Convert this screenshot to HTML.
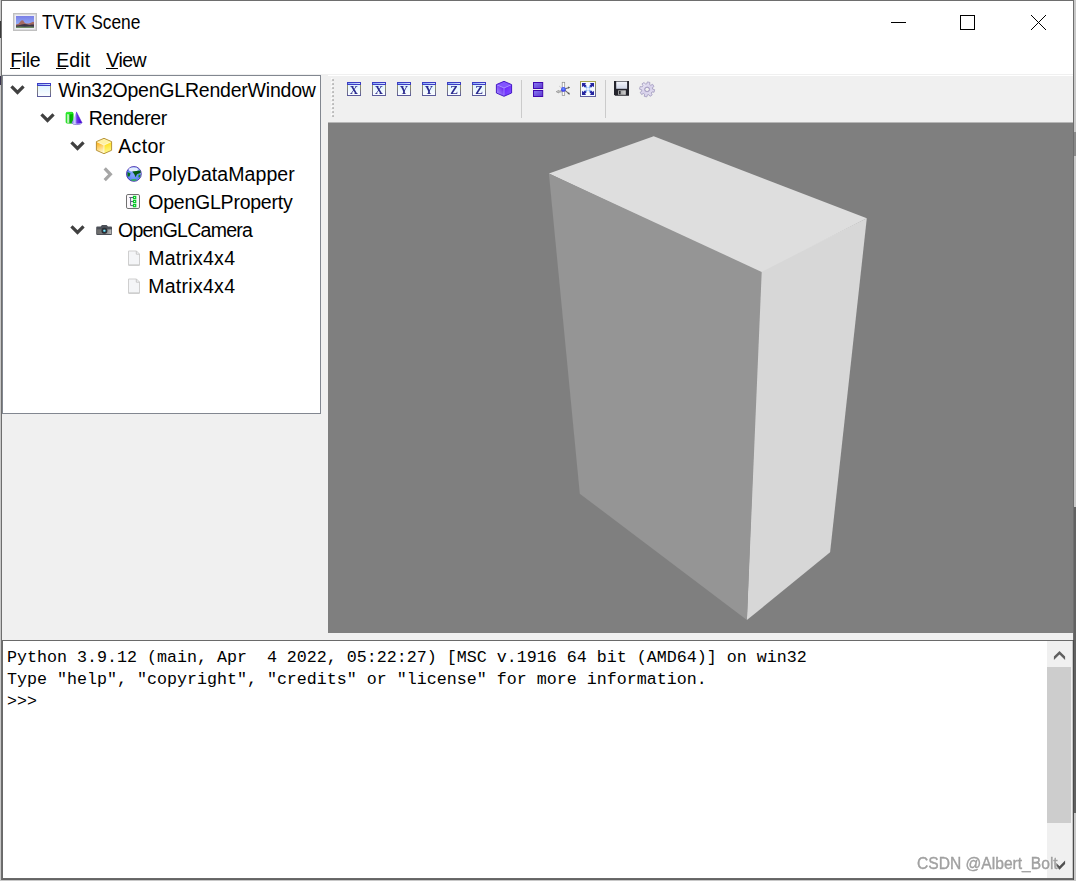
<!DOCTYPE html>
<html lang="en">
<head>
<meta charset="utf-8">
<title>TVTK Scene</title>
<style>
  html, body { margin: 0; padding: 0; }
  body {
    width: 1076px; height: 881px; overflow: hidden; position: relative;
    background: #c8c8c8;
    font-family: "Liberation Sans", sans-serif;
    font-size: 19px; color: #000;
  }
  .abs { position: absolute; }
  #win { left: 1px; top: 0; width: 1073px; height: 879px; background: #f0f0f0; }
  #frame { z-index: 6; left: 1px; top: 0; width: 1071px; height: 878px; border: 1px solid #6e6e6e; border-bottom-color: #646464; pointer-events: none; }
  #titlebar { left: 2px; top: 1px; width: 1071px; height: 73px; background: #fff; }
  #title { top: 8px; line-height: 28px; white-space: pre; font-size: 20px; }
  .menu { top: 46px; line-height: 28px; white-space: pre; font-size: 19.5px; }
  .menu u { text-decoration: none; }
  .ul { top: 68px; height: 1px; background: #000; }
  #tree { left: 2px; top: 75px; width: 317px; height: 337px; background: #fff; border: 1px solid #828790; }
  .row { height: 28px; line-height: 28px; white-space: pre; font-size: 19.5px; }
  #toolbar-hi { left: 328px; top: 75px; width: 745px; height: 1px; background: #fff; }
  #scene { left: 328px; top: 122px; width: 745px; height: 511px; background: #7f7f7f; border-top: 1px solid #b6b6b6; box-sizing: border-box; }
  #console { left: 2px; top: 640px; width: 1071px; height: 239px; background: #fff; border-top: 1px solid #6a6a6a; border-left: 1px solid #6a6a6a; border-bottom: 1px solid #6a6a6a; box-sizing: border-box; }
  #context { left: 7px; top: 646.5px; font-family: "Liberation Mono", monospace; font-size: 16.6667px; line-height: 22px; white-space: pre; margin: 0; }
  #sb { left: 1047px; top: 641px; width: 26px; height: 237px; background: #f0f0f0; border-right: 1px solid #c4c4c4; box-sizing: border-box; }
  #thumb { left: 1047px; top: 667px; width: 24px; height: 156px; background: #cdcdcd; }
  #wm { z-index: 7; left: 916.5px; top: 853.4px; font-size: 16px; -webkit-text-stroke: 0.35px #9c9c9c; transform: scaleX(0.975); transform-origin: 0 0; line-height: 22px; color: #a2a2a2; white-space: pre; text-shadow: 0 0 1.5px #fff, 0 0 1.5px #fff, 0 0 2px #fff; }
  svg { position: absolute; overflow: visible; }
  /*TUNE-START*/
  #title { left: 42.37px; transform: scaleX(0.8673); transform-origin: 0 0; }
  #m1 { left: 10.26px; letter-spacing: -0.332px; }
  #m2 { left: 56.26px; letter-spacing: 0.082px; }
  #m3 { left: 106.32px; letter-spacing: -0.513px; }
  #r1 { left: 58.34px; letter-spacing: -0.215px; }
  #r2 { left: 88.66px; letter-spacing: -0.395px; }
  #r3 { left: 118.29px; letter-spacing: 0.328px; }
  #r4 { left: 148.56px; letter-spacing: 0.071px; }
  #r5 { left: 148.32px; letter-spacing: -0.237px; }
  #r6 { left: 118.00px; letter-spacing: -0.751px; }
  #r7 { left: 148.18px; letter-spacing: 0.287px; }
  #r8 { left: 148.18px; letter-spacing: 0.287px; }
  /*TUNE-END*/
</style>
</head>
<body>
<div id="win" class="abs"></div>
<div id="titlebar" class="abs"></div>

<!-- title -->
<div id="title" class="abs">TVTK Scene</div>

<!-- menu -->
<div id="m1" class="abs menu"><u>F</u>ile</div>
<div id="m2" class="abs menu"><u>E</u>dit</div>
<div id="m3" class="abs menu"><u>V</u>iew</div>
<div class="abs ul" style="left:10px;width:10px"></div>
<div class="abs ul" style="left:56px;width:10px"></div>
<div class="abs ul" style="left:106px;width:12px"></div>

<!-- tree -->
<div id="tree" class="abs"></div>
<div id="r1" class="abs row" style="top:76px">Win32OpenGLRenderWindow</div>
<div id="r2" class="abs row" style="top:104px">Renderer</div>
<div id="r3" class="abs row" style="top:132px">Actor</div>
<div id="r4" class="abs row" style="top:160px">PolyDataMapper</div>
<div id="r5" class="abs row" style="top:188px">OpenGLProperty</div>
<div id="r6" class="abs row" style="top:216px">OpenGLCamera</div>
<div id="r7" class="abs row" style="top:244px">Matrix4x4</div>
<div id="r8" class="abs row" style="top:272px">Matrix4x4</div>

<!-- toolbar -->
<div id="toolbar-hi" class="abs"></div>

<!-- scene -->
<div id="scene" class="abs"></div>
<svg id="scenesvg" width="1076" height="881" viewBox="0 0 1076 881" style="left:0;top:0">
  <polygon points="760.2,270.9 866.8,218.2 830.1,552.3 746.9,620.1" fill="#d7d7d7"/>
  <polygon points="653.7,136.3 866.8,218.2 761.7,271.9 761.2,273.6 548.9,173.5" fill="#dedede"/>
  <polygon points="548.9,173.5 761.7,271.9 746.9,620.1 579.8,493.7" fill="#959595"/>
</svg>

<!-- icons overlay -->
<svg id="icons" width="1076" height="881" viewBox="0 0 1076 881" style="left:0;top:0;will-change:transform;z-index:5">
  <defs>
    <linearGradient id="gSky" x1="0" y1="0" x2="0" y2="1">
      <stop offset="0" stop-color="#7a7fe6"/><stop offset="0.6" stop-color="#8fa6f6"/><stop offset="1" stop-color="#a6e4f2"/>
    </linearGradient>
    <linearGradient id="gWinBody" x1="0" y1="0" x2="0" y2="1">
      <stop offset="0" stop-color="#dff3ff"/><stop offset="1" stop-color="#fbfdff"/>
    </linearGradient>
    <linearGradient id="gWinSide" x1="0" y1="0" x2="0" y2="1">
      <stop offset="0" stop-color="#a8a84e"/><stop offset="1" stop-color="#5c5ca2"/>
    </linearGradient>
    <linearGradient id="gWinBar" x1="0" y1="0" x2="1" y2="0">
      <stop offset="0" stop-color="#7fa4f4"/><stop offset="1" stop-color="#dbe8ff"/>
    </linearGradient>
    <linearGradient id="gCyl" x1="0" y1="0" x2="1" y2="0">
      <stop offset="0" stop-color="#10e010"/><stop offset="0.3" stop-color="#e8ffe8"/><stop offset="0.55" stop-color="#08a808"/><stop offset="1" stop-color="#00c400"/>
    </linearGradient>
    <linearGradient id="gCone" x1="0" y1="0" x2="1" y2="0">
      <stop offset="0" stop-color="#7a70f0"/><stop offset="0.3" stop-color="#cfdcff"/><stop offset="0.5" stop-color="#6a38e8"/><stop offset="1" stop-color="#4800dc"/>
    </linearGradient>
    <linearGradient id="gYL" x1="0" y1="0" x2="0.3" y2="1">
      <stop offset="0" stop-color="#ffa800"/><stop offset="1" stop-color="#fff6c8"/>
    </linearGradient>
    <linearGradient id="gYR" x1="0" y1="0" x2="0.2" y2="1">
      <stop offset="0" stop-color="#ffd800"/><stop offset="1" stop-color="#fffa90"/>
    </linearGradient>
    <linearGradient id="gPL" x1="1" y1="0" x2="0" y2="1">
      <stop offset="0" stop-color="#5a08f0"/><stop offset="1" stop-color="#b0a4ff"/>
    </linearGradient>
    <linearGradient id="gPR" x1="0" y1="0" x2="1" y2="1">
      <stop offset="0" stop-color="#6a18ff"/><stop offset="1" stop-color="#8058ff"/>
    </linearGradient>
    <linearGradient id="gPRect" x1="0" y1="0" x2="1" y2="1">
      <stop offset="0" stop-color="#8a7cf4"/><stop offset="1" stop-color="#5a34cc"/>
    </linearGradient>
    <radialGradient id="gGlobe" cx="0.45" cy="0.55" r="0.6">
      <stop offset="0" stop-color="#86a8ff"/><stop offset="0.7" stop-color="#5a86f4"/><stop offset="1" stop-color="#dcecff"/>
    </radialGradient>
    <linearGradient id="gCam" x1="0" y1="0" x2="1" y2="0">
      <stop offset="0" stop-color="#686868"/><stop offset="0.55" stop-color="#808080"/><stop offset="1" stop-color="#b8b8b8"/>
    </linearGradient>
    <linearGradient id="gLabel" x1="0" y1="0" x2="0" y2="1">
      <stop offset="0" stop-color="#f4f6fb"/><stop offset="1" stop-color="#cfd5e6"/>
    </linearGradient>
    <linearGradient id="gShut" x1="0" y1="0" x2="1" y2="0">
      <stop offset="0" stop-color="#9a9a9a"/><stop offset="1" stop-color="#d0d0d0"/>
    </linearGradient>
    <linearGradient id="gGear" x1="0" y1="0" x2="1" y2="1">
      <stop offset="0" stop-color="#f4f2fa"/><stop offset="0.5" stop-color="#d6d0ea"/><stop offset="1" stop-color="#e6e2f2"/>
    </linearGradient>
    <radialGradient id="gDot" cx="0.5" cy="0.4" r="0.6">
      <stop offset="0" stop-color="#6aa0ff"/><stop offset="1" stop-color="#2a20f0"/>
    </radialGradient>

              </defs>

  <!-- title icon -->
  <rect x="13" y="13" width="24" height="18" fill="#c0c0c0"/>
  <rect x="14.3" y="14.3" width="21.4" height="15.4" fill="#e6e6ea"/>
  <rect x="15.2" y="15.2" width="19.6" height="13.6" fill="#f0f0f8"/>
  <rect x="16" y="16" width="18" height="12" fill="url(#gSky)"/>
  <path d="M16,24.6 L18.6,23.8 L20.4,21.6 L21.8,20.3 L23.2,20.4 L24.4,22.4 L26,23.4 L29,23.6 L31.4,22.6 L33,21.8 L34,22 V28 H16 Z" fill="#a46a62"/>
  <path d="M16,25.6 L19,25.2 L21.6,24.6 L24.4,24 L26.6,24.2 L29.4,25 L31.6,24.4 L34,24.4 V28 H16 Z" fill="#3c3648"/>
  <path d="M16,26.8 L20,26.4 L25,26.8 L30,26.5 L34,26.8 V28 H16 Z" fill="#6f8e66"/>

  <!-- title buttons -->
  <rect x="891" y="22" width="15" height="1" fill="#000"/>
  <rect x="960.5" y="15.5" width="14" height="14" fill="none" stroke="#000" stroke-width="1"/>
  <path d="M1031,15 L1046,30 M1046,15 L1031,30" stroke="#000" stroke-width="1" fill="none"/>

  <!-- tree chevrons -->
  <g transform="translate(17.5,89.8)"><polyline points="-6.05,-3.4 0,2.7 6.05,-3.4" fill="none" stroke="#404040" stroke-width="3.2"/></g>
  <g transform="translate(47.5,117.8)"><polyline points="-6.05,-3.4 0,2.7 6.05,-3.4" fill="none" stroke="#404040" stroke-width="3.2"/></g>
  <g transform="translate(77.5,145.8)"><polyline points="-6.05,-3.4 0,2.7 6.05,-3.4" fill="none" stroke="#404040" stroke-width="3.2"/></g>
  <g transform="translate(77.5,229.8)"><polyline points="-6.05,-3.4 0,2.7 6.05,-3.4" fill="none" stroke="#404040" stroke-width="3.2"/></g>
  <polyline points="104.7,168.4 110.4,174.3 104.7,180.2" fill="none" stroke="#a6a6a6" stroke-width="3.2"/>

  <!-- tree icons -->
  <g transform="translate(37,83)" stroke="none"><rect x="0" y="0" width="14" height="14" fill="url(#gWinSide)"/>
      <rect x="1" y="3" width="12" height="10" fill="url(#gWinBody)"/>
      <rect x="0" y="0" width="14" height="3" fill="#3c3cc4"/>
      <rect x="1" y="1" width="12" height="1" fill="url(#gWinBar)"/>
      <rect x="0" y="13" width="14" height="1" fill="#5a5a9c"/></g>

  <!-- renderer: cylinder + cone -->
  <g>
    <rect x="66" y="112.3" width="7.2" height="11" rx="1.6" ry="1.4" fill="url(#gCyl)" stroke="#00d000" stroke-width="0.6"/>
    <ellipse cx="69.6" cy="113.3" rx="3.4" ry="1.1" fill="#20f020"/>
    <ellipse cx="76.9" cy="122.8" rx="5" ry="1.8" fill="#d8e0ff" stroke="#5a48b8" stroke-width="0.6"/>
    <path d="M76.3,111.8 L81.9,122.7 Q77,124.6 71.9,122.7 Z" fill="url(#gCone)"/>
    <path d="M76.3,111.8 L81.9,122.7" stroke="#4a10c8" stroke-width="0.6" fill="none"/>
  </g>

  <!-- actor: yellow cube -->
  <g>
    <path d="M104,138.3 L111.6,141.6 L104,145 L96.4,141.6 Z" fill="#fff2a4"/>
    <path d="M96.4,141.6 L104,145 L104,153.7 L96.4,150.3 Z" fill="url(#gYL)"/>
    <path d="M111.6,141.6 L104,145 L104,153.7 L111.6,150.3 Z" fill="url(#gYR)"/>
    <path d="M96.8,141.8 L104,145 L111.2,141.8 M104,145 V153.2" stroke="#fffbd8" stroke-width="0.8" fill="none"/>
    <path d="M104,138.3 L111.6,141.6 V150.3 L104,153.7 L96.4,150.3 V141.6 Z" fill="none" stroke="#b08a2c" stroke-width="0.9" stroke-linejoin="round"/>
  </g>

  <!-- globe -->
  <g>
    <circle cx="133.9" cy="173.9" r="7.4" fill="url(#gGlobe)" stroke="#4a2cae" stroke-width="0.9"/>
    <ellipse cx="133.4" cy="169.6" rx="4.6" ry="2.2" fill="#f2f8ff" opacity="0.9"/>
    <path d="M127.4,172 L130.6,173.4 L129.4,176.4 L127.6,176.6 Z" fill="#087018"/>
    <path d="M132.2,171.4 L140.4,170.6 L140.8,172.8 L137,174.2 L135.6,177.2 L134.2,174 Z" fill="#045a10"/>
    <path d="M138.6,175 L140.6,174.6 L140,177.4 L138.4,177.2 Z" fill="#18902a"/>
    <ellipse cx="133.8" cy="179.9" rx="3" ry="1" fill="#30b050" opacity="0.9"/>
  </g>

  <!-- property -->
  <g>
    <rect x="126.5" y="194.5" width="13" height="14" rx="1.4" fill="#fbf8fb" stroke="#707070" stroke-width="1"/>
    <path d="M129.3,197.5 H133 M130.6,197.5 V205.6 M130.6,201.5 H133 M130.6,205.6 H133" stroke="#5e5e80" stroke-width="1" fill="none"/>
    <rect x="132.9" y="195.8" width="3.4" height="3.4" fill="#08c828"/>
    <rect x="132.9" y="199.8" width="3.4" height="3.4" fill="#08c828"/>
    <rect x="132.9" y="203.9" width="3.4" height="3.4" fill="#08c828"/>
    <rect x="134.1" y="197" width="1" height="1" fill="#e8ffe8"/>
    <rect x="134.1" y="201" width="1" height="1" fill="#e8ffe8"/>
    <rect x="134.1" y="205.1" width="1" height="1" fill="#e8ffe8"/>
  </g>

  <!-- camera -->
  <g>
    <path d="M96.2,227.4 Q96.2,226.5 97.2,226.5 H100.6 L102,224.9 H106.6 L108,226.5 H111 Q112,226.5 112,227.4 V234 Q112,234.9 111,234.9 H97.2 Q96.2,234.9 96.2,234 Z" fill="#4c5058"/>
    <rect x="96.8" y="229.4" width="14.6" height="4.6" fill="url(#gCam)"/>
    <circle cx="104.4" cy="230.8" r="3" fill="#2c2e34"/>
    <circle cx="104.4" cy="230.8" r="1.25" fill="#48c8e4"/>
    <circle cx="104.2" cy="230.5" r="0.5" fill="#d8f8ff"/>
  </g>

  <!-- docs -->
  <g transform="translate(128,250.5)"><path d="M0.5,0.5 H8.5 L11.5,3.5 V14.7 H0.5 Z" fill="#f4f5f7" stroke="#cfcfcf" stroke-width="1"/>
      <path d="M8.3,0.6 V3.7 H11.4" fill="none" stroke="#c4c4c4" stroke-width="0.9"/>
      <path d="M0.6,14.6 H11.4" fill="none" stroke="#c8c8c8" stroke-width="1.1"/></g>
  <g transform="translate(128,278.5)"><path d="M0.5,0.5 H8.5 L11.5,3.5 V14.7 H0.5 Z" fill="#f4f5f7" stroke="#cfcfcf" stroke-width="1"/>
      <path d="M8.3,0.6 V3.7 H11.4" fill="none" stroke="#c4c4c4" stroke-width="0.9"/>
      <path d="M0.6,14.6 H11.4" fill="none" stroke="#c8c8c8" stroke-width="1.1"/></g>

  <!-- toolbar handle -->
  <g fill="#ffffff"><rect x="331.1" y="78.1" width="1.4" height="1.4"/><rect x="331.1" y="82.1" width="1.4" height="1.4"/><rect x="331.1" y="86.1" width="1.4" height="1.4"/><rect x="331.1" y="90.1" width="1.4" height="1.4"/><rect x="331.1" y="94.1" width="1.4" height="1.4"/><rect x="331.1" y="98.1" width="1.4" height="1.4"/><rect x="331.1" y="102.1" width="1.4" height="1.4"/><rect x="331.1" y="106.1" width="1.4" height="1.4"/><rect x="331.1" y="110.1" width="1.4" height="1.4"/><rect x="331.1" y="114.1" width="1.4" height="1.4"/></g>
  <g fill="#9c9c9c"><rect x="332.3" y="79.3" width="1.5" height="1.5"/><rect x="332.3" y="83.3" width="1.5" height="1.5"/><rect x="332.3" y="87.3" width="1.5" height="1.5"/><rect x="332.3" y="91.3" width="1.5" height="1.5"/><rect x="332.3" y="95.3" width="1.5" height="1.5"/><rect x="332.3" y="99.3" width="1.5" height="1.5"/><rect x="332.3" y="103.3" width="1.5" height="1.5"/><rect x="332.3" y="107.3" width="1.5" height="1.5"/><rect x="332.3" y="111.3" width="1.5" height="1.5"/><rect x="332.3" y="115.3" width="1.5" height="1.5"/></g>

  <!-- toolbar separators -->
  <rect x="521" y="80" width="1" height="38" fill="#cbcbcb"/>
  <rect x="605" y="80" width="1" height="38" fill="#cbcbcb"/>

  <!-- view icons -->
  <g font-family="'Liberation Serif', serif" font-weight="bold" font-size="11.5" fill="#28288e" text-anchor="middle">
    <g transform="translate(347,82)" stroke="none"><rect x="0" y="0" width="14" height="14" fill="url(#gWinSide)"/>
      <rect x="1" y="3" width="12" height="10" fill="url(#gWinBody)"/>
      <rect x="0" y="0" width="14" height="3" fill="#3c3cc4"/>
      <rect x="1" y="1" width="12" height="1" fill="url(#gWinBar)"/>
      <rect x="0" y="13" width="14" height="1" fill="#5a5a9c"/></g><text x="354" y="93.8" opacity="0.99">X</text>
    <g transform="translate(372,82)" stroke="none"><rect x="0" y="0" width="14" height="14" fill="url(#gWinSide)"/>
      <rect x="1" y="3" width="12" height="10" fill="url(#gWinBody)"/>
      <rect x="0" y="0" width="14" height="3" fill="#3c3cc4"/>
      <rect x="1" y="1" width="12" height="1" fill="url(#gWinBar)"/>
      <rect x="0" y="13" width="14" height="1" fill="#5a5a9c"/></g><text x="379" y="93.8" opacity="0.99">X</text>
    <g transform="translate(397,82)" stroke="none"><rect x="0" y="0" width="14" height="14" fill="url(#gWinSide)"/>
      <rect x="1" y="3" width="12" height="10" fill="url(#gWinBody)"/>
      <rect x="0" y="0" width="14" height="3" fill="#3c3cc4"/>
      <rect x="1" y="1" width="12" height="1" fill="url(#gWinBar)"/>
      <rect x="0" y="13" width="14" height="1" fill="#5a5a9c"/></g><text x="404" y="93.8" opacity="0.99">Y</text>
    <g transform="translate(422,82)" stroke="none"><rect x="0" y="0" width="14" height="14" fill="url(#gWinSide)"/>
      <rect x="1" y="3" width="12" height="10" fill="url(#gWinBody)"/>
      <rect x="0" y="0" width="14" height="3" fill="#3c3cc4"/>
      <rect x="1" y="1" width="12" height="1" fill="url(#gWinBar)"/>
      <rect x="0" y="13" width="14" height="1" fill="#5a5a9c"/></g><text x="429" y="93.8" opacity="0.99">Y</text>
    <g transform="translate(447,82)" stroke="none"><rect x="0" y="0" width="14" height="14" fill="url(#gWinSide)"/>
      <rect x="1" y="3" width="12" height="10" fill="url(#gWinBody)"/>
      <rect x="0" y="0" width="14" height="3" fill="#3c3cc4"/>
      <rect x="1" y="1" width="12" height="1" fill="url(#gWinBar)"/>
      <rect x="0" y="13" width="14" height="1" fill="#5a5a9c"/></g><text x="454" y="93.8" opacity="0.99">Z</text>
    <g transform="translate(472,82)" stroke="none"><rect x="0" y="0" width="14" height="14" fill="url(#gWinSide)"/>
      <rect x="1" y="3" width="12" height="10" fill="url(#gWinBody)"/>
      <rect x="0" y="0" width="14" height="3" fill="#3c3cc4"/>
      <rect x="1" y="1" width="12" height="1" fill="url(#gWinBar)"/>
      <rect x="0" y="13" width="14" height="1" fill="#5a5a9c"/></g><text x="479" y="93.8" opacity="0.99">Z</text>
  </g>

  <!-- purple cube -->
  <g>
    <path d="M504,81.3 L511.6,84.6 L504,88 L496.4,84.6 Z" fill="#8356ff"/>
    <path d="M496.4,84.6 L504,88 L504,96.3 L496.4,93 Z" fill="url(#gPL)"/>
    <path d="M511.6,84.6 L504,88 L504,96.3 L511.6,93 Z" fill="url(#gPR)"/>
    <path d="M496.8,84.8 L504,88 L511.2,84.8 M504,88 V95.8" stroke="#a894ff" stroke-width="0.8" fill="none"/>
    <path d="M504,81.3 L511.6,84.6 V93 L504,96.3 L496.4,93 V84.6 Z" fill="none" stroke="#3a0cc0" stroke-width="0.9" stroke-linejoin="round"/>
  </g>

  <!-- two rects -->
  <rect x="533.5" y="82.5" width="9.2" height="6" fill="url(#gPRect)" stroke="#4008b0" stroke-width="1"/>
  <rect x="533.5" y="90.5" width="9.2" height="6" fill="url(#gPRect)" stroke="#4008b0" stroke-width="1"/>

  <!-- axes -->
  <g>
    <rect x="562.2" y="82.3" width="2.5" height="13.2" fill="#fdfdfd" stroke="#8a8a8a" stroke-width="0.7"/>
    <path d="M556.2,91.7 L558.6,90.4 L558.6,91.2 L563,90.2 L563,91.4 L558.6,92.4 L558.6,93 Z" fill="#d0d0d0" stroke="#808080" stroke-width="0.6"/>
    <path d="M564,89.6 L569,93.6 M564,89.2 L569,87.6" stroke="#6a6a6a" stroke-width="1.1" fill="none"/>
    <path d="M570,94.4 L567.4,94 L569,92.2 Z M570.1,87.2 L568,86.4 L568.4,88.8 Z" fill="#555"/>
    <path d="M559.6,86.4 L561.6,88.2" stroke="#9a9a9a" stroke-width="0.9" stroke-dasharray="0.9 0.7" fill="none"/>
    <circle cx="563.4" cy="89.4" r="2.3" fill="url(#gDot)"/>
  </g>

  <!-- fullscreen -->
  <g>
    <rect x="580" y="81" width="16" height="16" fill="url(#gWinSide)"/>
    <rect x="581" y="82" width="14" height="14" fill="#f6fbff"/>
    <path d="M584.4,85.4 L591.6,92.6 M591.6,85.4 L584.4,92.6" stroke="#80acf2" stroke-width="2" fill="none" stroke-linecap="round"/>
    <circle cx="588" cy="89" r="1.7" fill="#e4f0ff"/>
    <g fill="#2626a2">
      <path d="M582,83 H586.2 L585,84.3 L586.5,85.8 L584.8,87.5 L583.3,86 L582,87.2 Z"/>
      <path d="M594,83 H589.8 L591,84.3 L589.5,85.8 L591.2,87.5 L592.7,86 L594,87.2 Z"/>
      <path d="M582,95 H586.2 L585,93.7 L586.5,92.2 L584.8,90.5 L583.3,92 L582,90.8 Z"/>
      <path d="M594,95 H589.8 L591,93.7 L589.5,92.2 L591.2,90.5 L592.7,92 L594,90.8 Z"/>
    </g>
  </g>

  <!-- floppy -->
  <g>
    <path d="M614,81 H629 V95.8 H615.2 L614,94.6 Z" fill="#24242c"/>
    <rect x="616.2" y="81.6" width="10.9" height="7.2" fill="url(#gLabel)"/>
    <rect x="618" y="90.3" width="7.8" height="4.5" fill="url(#gShut)"/>
    <rect x="619" y="91" width="1.6" height="3.2" fill="#2a2a30"/>
  </g>

  <!-- gear -->
  <g>
    <path fill="url(#gGear)" stroke="#a098bc" stroke-width="0.8" stroke-linejoin="round" fill-rule="evenodd" d="M652.59,89.11 L654.60,89.66 L654.05,92.21 L652.00,91.90 L651.19,93.08 L652.21,94.89 L650.03,96.30 L648.80,94.63 L647.39,94.89 L646.84,96.90 L644.29,96.35 L644.60,94.30 L643.42,93.49 L641.61,94.51 L640.20,92.33 L641.87,91.10 L641.61,89.69 L639.60,89.14 L640.15,86.59 L642.20,86.90 L643.01,85.72 L641.99,83.91 L644.17,82.50 L645.40,84.17 L646.81,83.91 L647.36,81.90 L649.91,82.45 L649.60,84.50 L650.78,85.31 L652.59,84.29 L654.00,86.47 L652.33,87.70 Z M644.80,89.40 a2.3,2.1 0 1 0 4.6,0 a2.3,2.1 0 1 0 -4.6,0 Z"/>
    <ellipse cx="647.1" cy="89.4" rx="2.5" ry="2.3" fill="none" stroke="#a69ec2" stroke-width="0.7"/>
  </g>

  <!-- scrollbar arrows -->
  <polygon points="1053.9,660.1 1053.9,656.6 1059.5,651 1065.1,656.6 1065.1,660.1 1059.5,654.5" fill="#606060"/>
  <polygon points="1053.9,860.6 1053.9,864.1 1059.5,869.7 1065.1,864.1 1065.1,860.6 1059.5,866.2" fill="#505050"/>
</svg>


<!-- console -->
<div id="console" class="abs"></div>
<pre id="context" class="abs">Python 3.9.12 (main, Apr  4 2022, 05:22:27) [MSC v.1916 64 bit (AMD64)] on win32
Type "help", "copyright", "credits" or "license" for more information.
&gt;&gt;&gt; </pre>
<div id="sb" class="abs"></div>
<div id="thumb" class="abs"></div>
<div id="wm" class="abs">CSDN @Albert_Bolt</div>

<div class="abs" style="left:1074px;top:507px;width:2px;height:306px;background:#626262"></div>
<div class="abs" style="left:1074px;top:132px;width:2px;height:24px;background:#8a8a8a"></div>
<div class="abs" style="left:0;top:21px;width:1px;height:17px;background:#3a3a3a"></div>
<div id="frame" class="abs"></div>
<div class="abs" style="z-index:8;left:1073px;top:640px;width:1px;height:240px;background:#4a4a4a"></div>
<div class="abs" style="z-index:8;left:0;top:76px;width:1px;height:9px;background:#3a3450"></div>
</body>
</html>
